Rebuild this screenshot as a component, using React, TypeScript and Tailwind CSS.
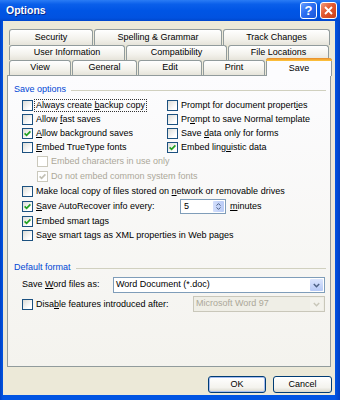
import React from "react";

function Acc({ t }: { t: string }) {
  const i = t.indexOf("&");
  if (i < 0) return <>{t}</>;
  return (
    <>
      {t.slice(0, i)}
      <span className="underline underline-offset-[1px]">{t[i + 1]}</span>
      {t.slice(i + 2)}
    </>
  );
}

function Box({ checked, disabled }: { checked?: boolean; disabled?: boolean }) {
  return (
    <span
      className={`w-[11px] h-[11px] shrink-0 border flex items-center justify-center ${
        disabled
          ? "border-[#cac8bb] bg-white"
          : "border-[#1c5180] bg-[linear-gradient(135deg,#dcdcd7,#ffffff_75%)]"
      }`}
    >
      {checked && (
        <svg width="7" height="7" viewBox="0 0 7 7">
          <path
            d="M0.6 3.4 L2.6 5.4 L6.4 1.4"
            stroke={disabled ? "#c2c0b4" : "#21a121"}
            strokeWidth="1.7"
            fill="none"
          />
        </svg>
      )}
    </span>
  );
}

function Check({
  label,
  checked,
  disabled,
  focus,
  h = "h-[14px]",
}: {
  label: string;
  checked?: boolean;
  disabled?: boolean;
  focus?: boolean;
  h?: string;
}) {
  return (
    <div className={`flex items-center gap-[3px] ${h}`}>
      <Box checked={checked} disabled={disabled} />
      <span
        className={`whitespace-nowrap leading-[11px] ${disabled ? "text-[#aca899]" : "text-black"} ${
          focus ? "outline outline-1 outline-dotted outline-[#333] px-[1px] -ml-[1px]" : ""
        }`}
      >
        <Acc t={label} />
      </span>
    </div>
  );
}

function Tab({ label, w, h = "h-[15px]" }: { label: string; w: string; h?: string }) {
  return (
    <div
      className={`${w} ${h} border border-b-0 border-[#919b9c] rounded-t-[3px] bg-[linear-gradient(to_bottom,#ffffff,#f3f2ec_60%,#e6e4da)] flex items-center justify-center whitespace-nowrap`}
    >
      {label}
    </div>
  );
}

function GroupHead({ label }: { label: string }) {
  return (
    <div className="flex items-center h-[12px] pl-[6px] pr-[4px]">
      <span className="text-[#0046d5] whitespace-nowrap">{label}</span>
      <div className="flex-1 h-px bg-[#d0d0bf] ml-[5px]" />
    </div>
  );
}

function Chevron({ color }: { color: string }) {
  return (
    <svg width="7" height="5" viewBox="0 0 7 5">
      <path d="M0.8 1 L3.5 3.7 L6.2 1" stroke={color} strokeWidth="1.5" fill="none" />
    </svg>
  );
}

export default function App() {
  return (
    <div className="w-[340px] h-[400px] flex flex-col bg-[linear-gradient(to_right,#0041c4,#0054e3_3px,#0054e3_335px,#0041c4)] font-['Liberation_Sans',Arial,sans-serif] text-[9px] text-black overflow-hidden">
      {/* Title bar */}
      <div className="h-[21px] shrink-0 flex items-center justify-between bg-[linear-gradient(to_bottom,#2a7cf5,#0a5fea_20%,#0055e5_50%,#0152e0_85%,#0047cc)]">
        <span className="pl-[6px] text-white font-bold text-[10.5px] [text-shadow:1px_1px_0_#0a2a8a]">
          Options
        </span>
        <div className="flex items-center gap-[3px] pr-[3px]">
          <div className="w-[17px] h-[17px] rounded-[3px] border border-white bg-[linear-gradient(135deg,#6aa0ff,#2b6ef2_45%,#1a55d8)] flex items-center justify-center text-white font-bold text-[13px] leading-none">
            ?
          </div>
          <div className="w-[17px] h-[17px] rounded-[3px] border border-white bg-[linear-gradient(135deg,#f19a7c,#e2582f_45%,#c8401b)] flex items-center justify-center">
            <svg width="9" height="9" viewBox="0 0 9 9">
              <path d="M1 1 L8 8 M8 1 L1 8" stroke="white" strokeWidth="1.9" />
            </svg>
          </div>
        </div>
      </div>

      {/* Body */}
      <div className="flex-1 ml-[3px] mr-[5px] mb-[5px] bg-[#ece9d8] flex flex-col">
        {/* Tabs */}
        <div className="pt-[8px] pl-[6px] flex flex-col">
          <div className="flex gap-[1px] h-[16px]">
            <Tab label="Security" w="w-[84px]" h="h-[16px]" />
            <Tab label="Spelling & Grammar" w="w-[128px]" h="h-[16px]" />
            <Tab label="Track Changes" w="w-[107px]" h="h-[16px]" />
          </div>
          <div className="flex gap-[1px] h-[15px]">
            <Tab label="User Information" w="w-[116px]" />
            <Tab label="Compatibility" w="w-[101px]" />
            <Tab label="File Locations" w="w-[101px]" />
          </div>
          <div className="flex gap-[1px] h-[15px] items-end">
            <Tab label="View" w="w-[62px]" />
            <Tab label="General" w="w-[65px]" />
            <Tab label="Edit" w="w-[64px]" />
            <Tab label="Print" w="w-[62px]" />
            <div className="relative z-10 w-[66px] h-[18px] -mb-px border border-b-0 border-[#919b9c] border-t-0 rounded-t-[3px] bg-[#fcfcfe] flex flex-col">
              <div className="h-[3px] rounded-t-[3px] bg-[linear-gradient(to_bottom,#e68b2c,#ffc73c)] -mx-px" />
              <div className="flex-1 flex items-center justify-center">Save</div>
            </div>
          </div>
        </div>

        {/* Panel */}
        <div className="ml-[4px] w-[324px] h-[292px] border border-[#919b9c] bg-[linear-gradient(to_bottom,#fcfcfe,#f4f3ee)] flex flex-col pt-[8px]">
          <GroupHead label="Save options" />
          <div className="mt-[2px] pl-[14px] flex flex-col">
            <div className="flex">
              <div className="w-[145px] flex flex-col">
                <Check label="Always create &backup copy" focus />
                <Check label="Allow &fast saves" />
                <Check label="&Allow background saves" checked />
                <Check label="&Embed TrueType fonts" />
              </div>
              <div className="flex flex-col">
                <Check label="Prompt for document propert&ies" />
                <Check label="Pr&ompt to save Normal template" />
                <Check label="Save &data only for forms" />
                <Check label="Embed ling&uistic data" checked />
              </div>
            </div>
            <div className="pl-[15px] flex flex-col">
              <Check label="Embed characters in use only" disabled h="h-[15px]" />
              <Check label="Do not embed common system fonts" disabled checked h="h-[15px]" />
            </div>
            <Check label="Make local copy of files stored on &network or removable drives" h="h-[15px]" />
            <div className="flex items-center h-[15px]">
              <div className="w-[158px]">
                <Check label="&Save AutoRecover info every:" checked h="h-[15px]" />
              </div>
              <div className="w-[46px] h-[15px] border border-[#7f9db9] bg-white flex items-stretch">
                <span className="flex-1 pl-[3px] flex items-center">5</span>
                <div className="w-[11px] m-px rounded-[1px] bg-[linear-gradient(to_right,#d3defb,#b9cbf6)] flex flex-col items-center justify-center gap-[1px]">
                  <svg width="5" height="3" viewBox="0 0 5 3">
                    <path d="M0.5 2.6 L2.5 0.6 L4.5 2.6" stroke="#4d6185" strokeWidth="1" fill="none" />
                  </svg>
                  <svg width="5" height="3" viewBox="0 0 5 3">
                    <path d="M0.5 0.4 L2.5 2.4 L4.5 0.4" stroke="#4d6185" strokeWidth="1" fill="none" />
                  </svg>
                </div>
              </div>
              <span className="ml-[4px]">
                <Acc t="&minutes" />
              </span>
            </div>
            <Check label="Embed smart ta&gs" checked />
            <Check label="Sa&ve smart tags as XML properties in Web pages" h="h-[15px]" />
          </div>

          <div className="mt-[19px]">
            <GroupHead label="Default format" />
          </div>
          <div className="mt-[3px] pl-[14px] flex items-center h-[16px]">
            <span className="w-[91px] whitespace-nowrap">
              <Acc t="Save &Word files as:" />
            </span>
            <div className="w-[212px] h-[16px] border border-[#7f9db9] bg-white flex items-stretch">
              <span className="flex-1 pl-[2px] flex items-center">Word Document (*.doc)</span>
              <div className="w-[13px] m-px rounded-[1px] bg-[linear-gradient(to_bottom,#dbe5fd,#b6c9f6)] flex items-center justify-center">
                <Chevron color="#4d6185" />
              </div>
            </div>
          </div>
          <div className="mt-[3px] pl-[14px] flex items-center h-[16px]">
            <div className="w-[171px]">
              <Check label="Disa&ble features introduced after:" h="h-[16px]" />
            </div>
            <div className="w-[132px] h-[16px] border border-[#c9c7ba] bg-[#efeee6] flex items-stretch">
              <span className="flex-1 pl-[2px] flex items-center text-[#aca899]">Microsoft Word 97</span>
              <div className="w-[13px] m-px rounded-[1px] bg-[#f3f2ec] flex items-center justify-center">
                <Chevron color="#c9c7ba" />
              </div>
            </div>
          </div>
        </div>

        {/* Buttons */}
        <div className="mt-[9px] flex justify-end gap-[7px] pr-[3px]">
          <div className="w-[58px] h-[17px] rounded-[3px] border border-[#003c74] bg-[linear-gradient(to_bottom,#ffffff,#f4f3ee_70%,#d9d7cb)] shadow-[inset_0_0_0_1px_#a6bdf0] flex items-center justify-center">
            OK
          </div>
          <div className="w-[59px] h-[17px] rounded-[3px] border border-[#003c74] bg-[linear-gradient(to_bottom,#ffffff,#f4f3ee_70%,#d9d7cb)] flex items-center justify-center">
            Cancel
          </div>
        </div>
      </div>
    </div>
  );
}
